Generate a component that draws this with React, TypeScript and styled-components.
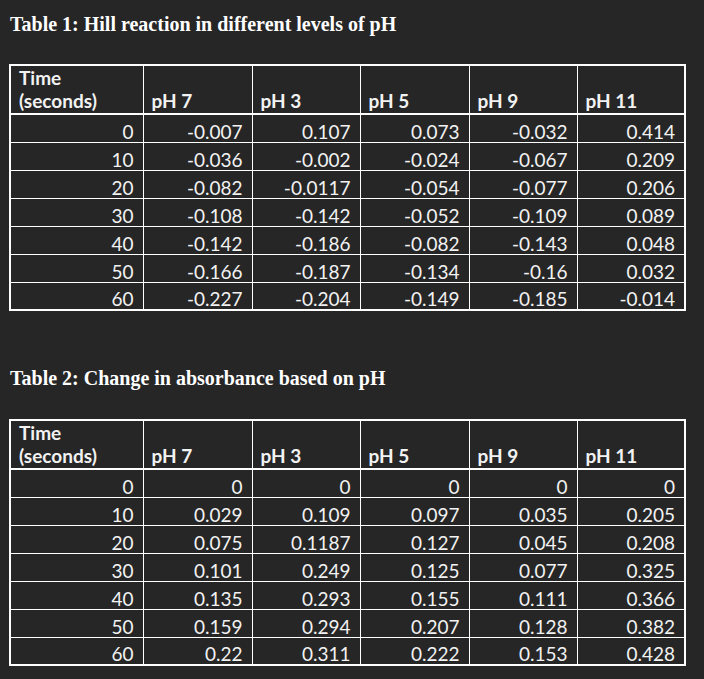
import React from "react";
import styled, { createGlobalStyle } from "styled-components";

const GlobalStyle = createGlobalStyle`
  html, body {
    margin: 0;
    padding: 0;
    background: #262626;
  }
`;

const Page = styled.div`
  width: 704px;
  min-height: 679px;
  background: #262626;
  padding: 14px 0 0 9px;
  box-sizing: border-box;
  color: #f2f2f2;
`;

const Title = styled.h2<{ $gap: number }>`
  margin: 0 0 ${(p) => p.$gap}px 1px;
  font-family: "Liberation Serif", "Times New Roman", serif;
  font-weight: bold;
  font-size: 20px;
  line-height: 20px;
  color: #ffffff;
`;

const Table = styled.table`
  border-collapse: collapse;
  width: 677px;
  table-layout: fixed;
  border: 2px solid #ffffff;
  font-family: Lato, "Open Sans", sans-serif;
  font-size: 19px;
  margin-bottom: 57px;
`;

const HeadCell = styled.th`
  border: 1px solid #ffffff;
  border-bottom-width: 2px;
  text-align: left;
  vertical-align: bottom;
  font-weight: bold;
  padding: 0 8px 1px 8px;
  line-height: 23px;
  height: 46px;
  color: #f2f2f2;
`;

const Row = styled.tr`
  height: 28px;
`;

const Cell = styled.td`
  border: 1px solid #ffffff;
  text-align: right;
  vertical-align: bottom;
  padding: 0 9px 0 8px;
  line-height: 20px;
  color: #f2f2f2;
`;

const widths = [133, 109, 108, 109, 108, 108];
const heads = ["pH 7", "pH 3", "pH 5", "pH 9", "pH 11"];
const times = [0, 10, 20, 30, 40, 50, 60];

const table1 = [
  ["-0.007", "0.107", "0.073", "-0.032", "0.414"],
  ["-0.036", "-0.002", "-0.024", "-0.067", "0.209"],
  ["-0.082", "-0.0117", "-0.054", "-0.077", "0.206"],
  ["-0.108", "-0.142", "-0.052", "-0.109", "0.089"],
  ["-0.142", "-0.186", "-0.082", "-0.143", "0.048"],
  ["-0.166", "-0.187", "-0.134", "-0.16", "0.032"],
  ["-0.227", "-0.204", "-0.149", "-0.185", "-0.014"],
];

const table2 = [
  ["0", "0", "0", "0", "0"],
  ["0.029", "0.109", "0.097", "0.035", "0.205"],
  ["0.075", "0.1187", "0.127", "0.045", "0.208"],
  ["0.101", "0.249", "0.125", "0.077", "0.325"],
  ["0.135", "0.293", "0.155", "0.111", "0.366"],
  ["0.159", "0.294", "0.207", "0.128", "0.382"],
  ["0.22", "0.311", "0.222", "0.153", "0.428"],
];

function DataTable({ rows }: { rows: string[][] }) {
  return (
    <Table>
      <colgroup>
        {widths.map((w, i) => (
          <col key={i} style={{ width: w }} />
        ))}
      </colgroup>
      <thead>
        <tr>
          <HeadCell>
            Time
            <br />
            (seconds)
          </HeadCell>
          {heads.map((h) => (
            <HeadCell key={h}>{h}</HeadCell>
          ))}
        </tr>
      </thead>
      <tbody>
        {rows.map((r, i) => (
          <Row key={i}>
            <Cell>{times[i]}</Cell>
            {r.map((v, j) => (
              <Cell key={j}>{v}</Cell>
            ))}
          </Row>
        ))}
      </tbody>
    </Table>
  );
}

export default function App() {
  return (
    <Page>
      <GlobalStyle />
      <Title $gap={30}>Table 1: Hill reaction in different levels of pH</Title>
      <DataTable rows={table1} />
      <Title $gap={31}>Table 2: Change in absorbance based on pH</Title>
      <DataTable rows={table2} />
    </Page>
  );
}
